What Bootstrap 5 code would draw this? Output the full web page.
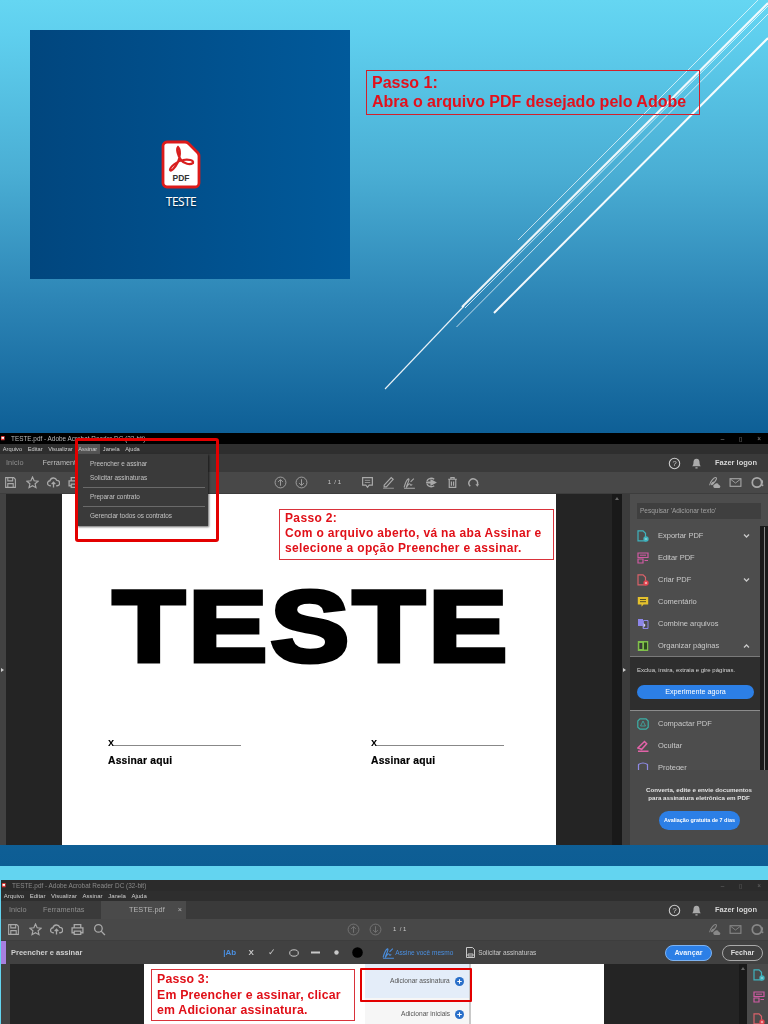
<!DOCTYPE html>
<html lang="pt">
<head>
<meta charset="utf-8">
<title>Passo a passo</title>
<link href="https://cdn.jsdelivr.net/npm/bootstrap@5.3.0/dist/css/bootstrap.min.css" rel="stylesheet">
<style>
html,body{margin:0;background:#63d4f0}
body{font-family:"Liberation Sans",Arial,sans-serif}
.deck{height:1024px;overflow:hidden}
.slide-a{height:433px;position:relative;background:linear-gradient(180deg,#65d6f2 0%,#5fcfee 8%,#4aaed4 40%,#2c84b5 70%,#0e5f96 100%);padding:30px 0 0 30px;gap:16px}
.desk{width:320px;height:249px;background:linear-gradient(90deg,#01467e,#015a9b);position:relative;flex:none}
.fileicon{position:absolute;left:131px;top:110px;width:40px;height:50px}
.filelabel{position:absolute;left:120px;width:62px;top:165px;text-align:center;color:#fff;font-size:12px;line-height:14px;font-family:"Noto Sans",sans-serif;letter-spacing:-.6px;text-shadow:0 1px 2px #001a33}
.note{border:1px solid #d3202a;color:#e3101c;font-weight:700;font-size:16px;line-height:19.5px;padding:1.500px 5px;width:334px;height:45px;margin-top:40px;position:relative;z-index:2;filter:blur(.3px)}
.rays{position:absolute;inset:0;width:768px;height:433px}
.slide-b{height:433px;background:linear-gradient(180deg,#2a7fb0,#0d5d94 100%);position:relative}
.slide-c{padding-top:14px;background:#63d4f0;position:relative}
.win{font-size:6px;color:#c8c8c8;position:relative;filter:blur(.3px)}
.win-b{height:412px;overflow:hidden}
.win-c{margin-left:1px;height:160px;overflow:hidden}
.titlebar{height:11px;background:#000;padding-left:1px;line-height:11px;color:#bbb;font-size:6.400px}
.win-c .titlebar{background:#2b2b2b;color:#8a8a8a}
.menubar{height:10px;background:#2e2e2e;line-height:10px;font-size:6px;color:#cfcfcf}
.win-b .menubar{font-size:5.700px;padding-left:0}
.menubar span{padding:0 2.800px}
.menubar .on{background:#555}
.tabbar{height:18px;background:#3a3a3a;font-size:7.300px;line-height:18px;color:#8e8e8e}
.tabbar .active-tab{background:#4a4a4a;color:#b5b5b5;width:85px;height:18px}
.toolbar{height:22px;background:#484848;color:#a9a9a9;border-bottom:1px solid #3d3d3d}
.cell{width:21.4px;flex:none;display:flex;justify-content:center;align-items:center}
.cell svg{width:13px;height:13px}
.pager{width:44px;flex:none;text-align:center;font-size:6px;color:#c8c8c8}
.logon{font-size:7.5px;font-weight:700;color:#d6d6d6;margin-left:15px;margin-right:11px}
.stage{height:351px;background:#242424}
.gutter-l{width:6px;background:#424242;position:relative}
.arrowtip{position:absolute;left:1px;top:174px;border-left:3px solid #ccc;border-top:2.5px solid transparent;border-bottom:2.5px solid transparent}
.sheet{width:494px;background:#fff;position:relative;flex:none}
.well{width:74px;flex:none;background:#242424;position:relative}
.scroll{position:absolute;right:8px;top:0;bottom:0;width:10px;background:#191919}
.scrolltip{position:absolute;left:3px;top:3px;border-bottom:3px solid #666;border-left:2.500px solid transparent;border-right:2.500px solid transparent}
.gutter-r{position:absolute;right:0;top:0;bottom:0;width:8px;background:#3c3c3c}
.gutter-r .arrowtip{left:1px}
.bigword{font-weight:700;font-size:101px;line-height:1;color:#000;-webkit-text-stroke:5px #000;transform:scaleX(1.16);transform-origin:left top;position:absolute;left:51px;top:82px;letter-spacing:3.500px;white-space:nowrap}
.signs{position:absolute;left:46px;top:243px;width:400px;gap:130px;color:#000}
.signline{width:133px}
.signx{font-weight:700;font-size:11px;line-height:10px;display:flex;align-items:flex-end}
.signx i{display:block;flex:1;border-bottom:1px solid #888;margin-bottom:1px}
.signtext{font-weight:700;font-size:10.3px;line-height:12px;margin-top:8px;letter-spacing:.2px;-webkit-text-stroke:.2px #000}
.redbox{position:absolute;border:3px solid #e30000;border-radius:3px}
.rb-menu{left:75px;top:5px;width:144px;height:104px;z-index:6}
.drop{position:absolute;left:77px;top:21px;width:131px;height:72px;background:#3a3a3a;box-shadow:1px 1px 2px #0009;font-size:6.4px;color:#c4c4c4;padding-top:3px;z-index:5}
.drop div{padding-left:13px;line-height:14px}
.drop hr{margin:2px 3px 2px 6px;border-color:#6a6a6a;opacity:1}
.callout{position:absolute;background:#fff;color:#e01018;font-weight:700;border:1px solid #d9323a;white-space:nowrap}
.cb{left:217px;top:15px;width:275px;height:51px;font-size:12px;line-height:15px;padding:1px 5px;letter-spacing:.35px}
.cc{left:7px;top:5px;width:204px;height:52px;font-size:12.300px;line-height:15.5px;padding:2px 5px;letter-spacing:.2px}
.side{width:138px;flex:none;background:#4d4d4d;position:relative;overflow:hidden;color:#c9c9c9;font-size:7.5px}
.search{margin:9px 0 6px 7px;width:124px;height:16px;background:#3f3f3f;font-size:6.5px;line-height:16px;color:#a0a0a0;padding-left:3px}
.tool{height:22px;padding-left:7px;gap:9px;width:130px;position:relative}
.tool svg{width:12px;height:12px;flex:none}
.tool .chev{position:absolute;left:113px;top:8px;width:7px;height:6px}
.tease{width:130px;height:55px;background:#2e2e2e;border-top:1px solid #7a7a7a;border-bottom:1px solid #8c8c8c;padding:9px 0 0 7px;font-size:6px;color:#d5d5d5;margin:-1px 0 2px}
.cta{width:117px;height:14px;background:#2c7fe6;border-radius:7px;color:#fff;font-size:7.2px;line-height:14px;text-align:center;margin-top:10px}
.promo{position:absolute;left:0;right:0;bottom:0;height:75px;background:#4a4a4a;text-align:center;font-size:6.2px;line-height:8px;font-weight:700;color:#e2e2e2;padding-top:16px}
.cta2{width:81px;height:19px;border-radius:10px;background:#2c7fe6;color:#fff;font-size:5.4px;line-height:19px;margin:9px 0 0 29px}
.railbar{position:absolute;right:0;top:32px;width:8px;height:244px;background:#1a1a1a}
.railbar i{display:block;margin:1px 0 0 4px;width:1px;height:100%;background:#888}
.fillbar{height:23px;background:#414141;color:#c8c8c8;font-size:7.5px}
.purple{width:5px;height:23px;background:#a67fe0;flex:none}
.fillname{font-weight:700;margin-left:5px;width:208px;color:#cfcfcf}
.pill{border-radius:9px;height:16px;line-height:14px;text-align:center;font-size:7.2px;font-weight:700;flex:none}
.pill-a{width:47px;background:#2c7fe6;border:1px solid #7db3f2;color:#eaf3ff;margin-left:auto}
.pill-b{width:41px;border:1px solid #aaa;color:#ddd;margin:0 5px 0 10px}
.stage-c{height:70px;background:#242424}
.gutter-c{width:9px;background:#424242;flex:none}
.well-l{width:134px;flex:none}
.sheet-c{width:460px;flex:none;background:#fff;position:relative}
.signpanel{position:absolute;left:221px;top:0;width:106px;height:70px;background:#f6f6f6;border-right:2px solid #c9c9c9;font-size:6.6px;color:#555}
.signrow{height:34px;background:#e4edf9;padding-left:25px;gap:5px}
.signrow.plain{background:transparent;padding-left:36px;height:32px}
.plus{width:9px;height:9px;flex:none}
.rb-sign{left:216px;top:4px;width:112px;height:34px;border-width:2.5px;border-radius:1px;z-index:4}
.well-r{flex:1;position:relative}
.rail-c{position:absolute;right:0;top:0;bottom:0;width:21px;background:#4a4a4a;padding:5px 0 0 6px}
.rail-c svg{width:12px;height:12px;display:block;margin-bottom:10px}
.scroll-c{position:absolute;right:21px;top:0;bottom:0;width:8px;background:#191919}
.scroll-c .scrolltip{left:1.500px}
</style>
</head>
<body>
<svg width="0" height="0" class="position-absolute">
<defs>
<symbol id="i-save" viewBox="0 0 12 12"><path d="M1.5 1.5h7.5l1.5 1.5v7.5h-9z M3.5 1.5v3h4.5v-3 M3.5 10.5v-3.500h5v3.500" fill="none" stroke="currentColor"/></symbol>
<symbol id="i-star" viewBox="0 0 12 12"><path d="M6 1l1.500 3.400 3.700.4-2.800 2.400.8 3.600L6 9l-3.200 1.800.8-3.600L.8 4.800l3.700-.4z" fill="none" stroke="currentColor" stroke-width="1.100"/></symbol>
<symbol id="i-cloud" viewBox="0 0 12 12"><path d="M3.500 9H3a2.300 2.300 0 0 1-.3-4.600A3.300 3.300 0 0 1 9 4a2.500 2.500 0 0 1 .3 5H8.500 M6 10.500V6 M4.300 7.500L6 5.800l1.700 1.700" fill="none" stroke="currentColor" stroke-width="1.200"/></symbol>
<symbol id="i-print" viewBox="0 0 12 12"><path d="M3 4V1.500h6V4 M3 9H1V4.500h10V9H9 M3 7.500h6v3H3z" fill="none" stroke="currentColor" stroke-width="1.200"/></symbol>
<symbol id="i-find" viewBox="0 0 12 12"><circle cx="5" cy="5" r="3.500" fill="none" stroke="currentColor" stroke-width="1.200"/><path d="M7.500 7.500l3.500 3.500" stroke="currentColor" stroke-width="1.300"/></symbol>
<symbol id="i-up" viewBox="0 0 12 12"><circle cx="6" cy="6" r="5" fill="none" stroke="currentColor" stroke-width=".8"/><path d="M6 9V3.500M3.800 5.500L6 3.300l2.200 2.200" fill="none" stroke="currentColor" stroke-width=".8"/></symbol>
<symbol id="i-down" viewBox="0 0 12 12"><circle cx="6" cy="6" r="5" fill="none" stroke="currentColor" stroke-width=".8"/><path d="M6 3v5.500M3.800 6.500L6 8.700l2.200-2.200" fill="none" stroke="currentColor" stroke-width=".8"/></symbol>
<symbol id="i-note" viewBox="0 0 12 12"><path d="M1.500 1.500h9v7h-3L6 10.500 4.500 8.500h-3z" fill="none" stroke="currentColor" stroke-width="1.100"/><path d="M3.500 4h5M3.500 6h5" stroke="currentColor" stroke-width=".7"/></symbol>
<symbol id="i-pen" viewBox="0 0 12 12"><path d="M2 8.500L8.500 1.500l1.800 1.600L4 10H2z" fill="none" stroke="currentColor" stroke-width="1.100"/><path d="M1 11.300h10" stroke="currentColor" stroke-width=".7"/></symbol>
<symbol id="i-sign" viewBox="0 0 12 12"><path d="M1 10.500C2 7 4 3 5 2.500c1.500 0-.8 4.500-2 8 2-3 3-4 3.500-3s.8 1.500 2 .3 M7 5.500L10 2.500M1 11.300h10" fill="none" stroke="currentColor" stroke-width="1"/></symbol>
<symbol id="i-share" viewBox="0 0 12 12"><path d="M8.500 3A4.500 4.500 0 0 0 1.800 4.500 M8.500 9A4.500 4.500 0 0 1 1.800 7.500" fill="none" stroke="currentColor" stroke-width="1.300"/><path d="M1 5h4V2.800L11 6 5 9.200V7H1z" fill="currentColor"/></symbol>
<symbol id="i-trash" viewBox="0 0 12 12"><path d="M2 3h8M4.500 3V1.500h3V3M3 3v7.500h6V3M5 5v4M7 5v4" fill="none" stroke="currentColor" stroke-width="1.100"/></symbol>
<symbol id="i-undo" viewBox="0 0 12 12"><path d="M3 9.500A4 4 0 1 1 9.500 8" fill="none" stroke="currentColor" stroke-width="1.300"/><path d="M7.800 7.500h3.400L9.500 10z" fill="currentColor"/></symbol>
<symbol id="i-signcloud" viewBox="0 0 12 12"><path d="M1.500 8.500C2 5 6 .5 7.500 1.500S5 7 3.800 7.800 3.500 5.500 5.500 5.500" fill="none" stroke="currentColor"/><path d="M6 11a1.700 1.700 0 0 1 .3-3.300 2 2 0 0 1 3.700.5 1.400 1.400 0 0 1 0 2.800z" fill="currentColor"/></symbol>
<symbol id="i-mail" viewBox="0 0 12 12"><rect x="1" y="2.500" width="10" height="7" fill="none" stroke="currentColor"/><path d="M1.500 3l4.500 3.500L10.500 3" fill="none" stroke="currentColor" stroke-width=".8"/></symbol>
<symbol id="i-user" viewBox="0 0 12 12"><circle cx="5.500" cy="6" r="4.300" fill="none" stroke="currentColor" stroke-width="1.600"/><circle cx="10.500" cy="8.500" r="1" fill="currentColor"/><rect x="10" y="4" width="1.100" height="3" fill="currentColor"/></symbol>
<symbol id="i-help" viewBox="0 0 12 12"><circle cx="6" cy="6" r="4.800" fill="none" stroke="currentColor"/><text x="6" y="8.500" font-size="7" text-anchor="middle" fill="currentColor" font-family="Liberation Sans">?</text></symbol>
<symbol id="i-bell" viewBox="0 0 12 12"><path d="M6 1.500c2 0 2.800 1.500 2.800 3.500 0 2 .7 3 1.200 3.500H2c.5-.5 1.200-1.500 1.200-3.500S4 1.500 6 1.500z M5 9.500h2v1H5z" fill="currentColor"/></symbol>
<symbol id="t-export" viewBox="0 0 12 12"><path d="M1 .8h5l2.500 2.500v7.500H1z" fill="none" stroke="#3fb2bd" stroke-width="1.200"/><circle cx="9" cy="9" r="2.700" fill="#3fb2bd"/><path d="M7.800 9h2.400" stroke="#fff" stroke-width=".6"/></symbol>
<symbol id="t-edit" viewBox="0 0 12 12"><path d="M1 1h10v4.500H1z M1 7h5v4H1z" fill="none" stroke="#cf5ba3" stroke-width="1.200"/><path d="M3 3.200h6M7.500 8.500H11" stroke="#cf5ba3" stroke-width="1"/></symbol>
<symbol id="t-create" viewBox="0 0 12 12"><path d="M1 .8h5l2.500 2.500v7.500H1z" fill="none" stroke="#d9626a" stroke-width="1.200"/><circle cx="9" cy="9" r="2.700" fill="#e2414c"/><path d="M7.800 9h2.400M9 7.800v2.400" stroke="#fff" stroke-width=".6"/></symbol>
<symbol id="t-comment" viewBox="0 0 12 12"><path d="M.8 1h10.400v7.500H6.500L4.500 10.800V8.500H.8z" fill="#e4c12d"/><path d="M3 3.500h6M3 5.700h6" stroke="#54502a" stroke-width="1"/></symbol>
<symbol id="t-combine" viewBox="0 0 12 12"><path d="M1 1h5v7H1z" fill="#8d86ea"/><path d="M6.500 2.500h4.500v8H6z" fill="none" stroke="#8d86ea"/><path d="M6.500 5l2 2-2 3z" fill="#d5d3ff"/></symbol>
<symbol id="t-pages" viewBox="0 0 12 12"><rect x=".8" y="1" width="10.400" height="10" fill="#7fc04a"/><rect x="2.300" y="3" width="3" height="6" fill="#3a3a3a"/><rect x="7" y="2.500" width="3" height="7" fill="#2d4a1e"/></symbol>
<symbol id="t-compress" viewBox="0 0 12 12"><path d="M3 .8h6l2.200 2.200v6.200L9 11.200H3L.8 9.200V3z" fill="none" stroke="#3cb0a7" stroke-width="1.200"/><path d="M3.500 8L6 3l2.500 5z" fill="none" stroke="#3cb0a7" stroke-width=".8"/></symbol>
<symbol id="t-redact" viewBox="0 0 12 12"><path d="M1 11.200h10.500M.8 8L7.500 1.500l2.200 2.300-5 5.500z" fill="none" stroke="#e263a8" stroke-width="1.500"/></symbol>
<symbol id="t-protect" viewBox="0 0 12 12"><path d="M1.500 12V2.500C3 1.500 4.500 1 6 1s3 .5 4.500 1.500V12" fill="none" stroke="#8f8ae6" stroke-width="1.200"/></symbol>
<symbol id="i-chev" viewBox="0 0 7 6"><path d="M1 1.500l2.500 2.500L6 1.500" fill="none" stroke="currentColor" stroke-width="1.300"/></symbol>
<symbol id="i-chevup" viewBox="0 0 7 6"><path d="M1 4.500L3.500 2 6 4.500" fill="none" stroke="currentColor" stroke-width="1.300"/></symbol>
<symbol id="i-plus" viewBox="0 0 10 10"><circle cx="5" cy="5" r="5" fill="#2a6fc9"/><path d="M5 2.500v5M2.500 5h5" stroke="#fff" stroke-width="1.200"/></symbol>
<symbol id="i-pdf" viewBox="0 0 10 10"><rect width="6" height="7" x="0" y="1" rx=".5" fill="#e03a3a"/><rect x="1" y="2.500" width="4" height="3" fill="#fff"/></symbol>
</defs>
</svg>

<div class="deck">

<section class="slide-a d-flex align-items-start">
  <svg class="rays" viewBox="0 0 768 433" aria-hidden="true">
    <g stroke="#fff" fill="none">
      <path d="M518 240L758 0" stroke-width=".9" stroke-opacity=".75"/>
      <path d="M462 307L768 3" stroke-width="2.200" stroke-opacity=".9"/>
      <path d="M465 308L768 6" stroke-width="1" stroke-opacity=".75"/>
      <path d="M456.500 327L768 14" stroke-width=".9" stroke-opacity=".8"/>
      <path d="M494 313L768 38" stroke-width="2" stroke-opacity=".95"/>
      <path d="M385 389L464 306" stroke-width="1.100" stroke-opacity=".9"/>
    </g>
  </svg>
  <div class="desk">
    <svg class="fileicon" viewBox="0 0 40 50" aria-hidden="true">
      <path d="M6 2h18c1.500 0 2.500.5 3.500 1.500l9 9c1 1 1.500 2 1.500 3.500v27a4 4 0 0 1-4 4H6a4 4 0 0 1-4-4V6a4 4 0 0 1 4-4z" fill="#fff" stroke="#dc1a1a" stroke-width="2.800"/>
      <path d="M17 7C15 9 17 16 20 20C23 24 29 25 32 23C33 20 27 19 22 20C16 21 9 27 9 30C10 32 14 28 17 22C19 17 20 10 17 7Z" fill="none" stroke="#d81e1e" stroke-width="2.200"/>
      <text x="20" y="41" text-anchor="middle" font-size="8.500" font-weight="700" fill="#333" font-family="Liberation Sans">PDF</text>
    </svg>
    <div class="filelabel">TESTE</div>
  </div>
  <div class="note">Passo 1:<br>Abra o arquivo PDF desejado pelo Adobe</div>
</section>

<section class="slide-b">
  <div class="win win-b">
    <div class="titlebar d-flex align-items-center gap-1"><svg width="6" height="7"><use href="#i-pdf"/></svg><span>TESTE.pdf - Adobe Acrobat Reader DC (32-bit)</span>
      <span class="ms-auto d-flex text-white-50" style="gap:15px;margin-right:7px"><span>–</span><span>▯</span><span>×</span></span></div>
    <div class="menubar d-flex"><span>Arquivo</span><span>Editar</span><span>Visualizar</span><span class="on">Assinar</span><span>Janela</span><span>Ajuda</span></div>
    <div class="tabbar d-flex align-items-center">
      <span class="ps-2 me-4" style="margin-left:-2px">Início</span><span style="margin-left:-5px;color:#bbb">Ferramentas</span>
      <span class="cell ms-auto" style="color:#ccc"><svg><use href="#i-help"/></svg></span><span class="cell" style="color:#aaa"><svg><use href="#i-bell"/></svg></span><span class="logon" style="margin-left:8px">Fazer logon</span>
    </div>
    <div class="toolbar d-flex align-items-center">
      <span class="cell"><svg><use href="#i-save"/></svg></span><span class="cell"><svg><use href="#i-star"/></svg></span><span class="cell"><svg><use href="#i-cloud"/></svg></span><span class="cell"><svg><use href="#i-print"/></svg></span>
      <span class="cell" style="margin-left:184px"><svg><use href="#i-up"/></svg></span><span class="cell"><svg><use href="#i-down"/></svg></span><span class="pager">1 &nbsp;/ 1</span>
      <span class="cell"><svg><use href="#i-note"/></svg></span><span class="cell"><svg><use href="#i-pen"/></svg></span><span class="cell"><svg><use href="#i-sign"/></svg></span><span class="cell"><svg><use href="#i-share"/></svg></span><span class="cell"><svg><use href="#i-trash"/></svg></span><span class="cell"><svg><use href="#i-undo"/></svg></span>
      <span class="cell ms-auto"><svg><use href="#i-signcloud"/></svg></span><span class="cell"><svg><use href="#i-mail"/></svg></span><span class="cell"><svg><use href="#i-user"/></svg></span>
    </div>
    <div class="stage d-flex">
      <div class="gutter-l"><i class="arrowtip"></i></div>
      <div style="width:56px;flex:none"></div>
      <div class="sheet">
        <div class="bigword">TESTE</div>
        <div class="signs d-flex">
          <div class="signline"><div class="signx">x<i></i></div><div class="signtext">Assinar aqui</div></div>
          <div class="signline"><div class="signx">x<i></i></div><div class="signtext">Assinar aqui</div></div>
        </div>
        <div class="callout cb">Passo 2:<br>Com o arquivo aberto, vá na aba Assinar e<br>selecione a opção Preencher e assinar.</div>
      </div>
      <div class="well"><div class="scroll"><i class="scrolltip"></i></div><div class="gutter-r"><i class="arrowtip"></i></div></div>
      <div class="side">
        <div class="search">Pesquisar 'Adicionar texto'</div>
        <div class="tool d-flex align-items-center"><svg><use href="#t-export"/></svg>Exportar PDF<svg class="chev"><use href="#i-chev"/></svg></div>
        <div class="tool d-flex align-items-center"><svg><use href="#t-edit"/></svg>Editar PDF</div>
        <div class="tool d-flex align-items-center"><svg><use href="#t-create"/></svg>Criar PDF<svg class="chev"><use href="#i-chev"/></svg></div>
        <div class="tool d-flex align-items-center"><svg><use href="#t-comment"/></svg>Comentário</div>
        <div class="tool d-flex align-items-center"><svg><use href="#t-combine"/></svg>Combine arquivos</div>
        <div class="tool d-flex align-items-center"><svg><use href="#t-pages"/></svg>Organizar páginas<svg class="chev"><use href="#i-chevup"/></svg></div>
        <div class="tease">Exclua, insira, extraia e gire páginas.<div class="cta">Experimente agora</div></div>
        <div class="tool d-flex align-items-center"><svg><use href="#t-compress"/></svg>Compactar PDF</div>
        <div class="tool d-flex align-items-center"><svg><use href="#t-redact"/></svg>Ocultar</div>
        <div class="tool d-flex align-items-center"><svg><use href="#t-protect"/></svg>Proteger</div>
        <div class="railbar"><i></i></div>
        <div class="promo"><div>Converta, edite e envie documentos<br>para assinatura eletrônica em PDF</div><div class="cta2">Avaliação gratuita de 7 dias</div></div>
      </div>
    </div>
    <div class="drop"><div>Preencher e assinar</div><div>Solicitar assinaturas</div><hr><div>Preparar contrato</div><hr><div>Gerenciar todos os contratos</div></div>
    <div class="redbox rb-menu"></div>
  </div>
</section>

<section class="slide-c">
  <div class="win win-c">
    <div class="titlebar d-flex align-items-center gap-1"><svg width="6" height="7"><use href="#i-pdf"/></svg><span>TESTE.pdf - Adobe Acrobat Reader DC (32-bit)</span>
      <span class="ms-auto d-flex" style="gap:15px;margin-right:7px;color:#666"><span>–</span><span>▯</span><span>×</span></span></div>
    <div class="menubar d-flex"><span>Arquivo</span><span>Editar</span><span>Visualizar</span><span>Assinar</span><span>Janela</span><span>Ajuda</span></div>
    <div class="tabbar d-flex align-items-center">
      <span style="margin-left:8px;width:34px">Início</span><span style="width:58px">Ferramentas</span>
      <span class="active-tab d-flex justify-content-between"><span style="margin-left:28px">TESTE.pdf</span><span class="me-1">×</span></span>
      <span class="cell ms-auto" style="color:#ccc"><svg><use href="#i-help"/></svg></span><span class="cell" style="color:#aaa"><svg><use href="#i-bell"/></svg></span><span class="logon" style="margin-left:8px">Fazer logon</span>
    </div>
    <div class="toolbar d-flex align-items-center">
      <span class="cell" style="margin-left:2px"><svg><use href="#i-save"/></svg></span><span class="cell"><svg><use href="#i-star"/></svg></span><span class="cell"><svg><use href="#i-cloud"/></svg></span><span class="cell"><svg><use href="#i-print"/></svg></span><span class="cell"><svg><use href="#i-find"/></svg></span>
      <span class="cell" style="margin-left:233px;color:#777"><svg><use href="#i-up"/></svg></span><span class="cell" style="color:#777"><svg><use href="#i-down"/></svg></span><span class="pager" style="margin-left:-8px">1 &nbsp;/ 1</span>
      <span class="cell ms-auto" style="color:#888"><svg><use href="#i-signcloud"/></svg></span><span class="cell" style="color:#888"><svg><use href="#i-mail"/></svg></span><span class="cell" style="color:#888"><svg><use href="#i-user"/></svg></span>
    </div>
    <div class="fillbar d-flex align-items-center">
      <span class="purple"></span><span class="fillname">Preencher e assinar</span>
      <span class="cell" style="color:#4a8fe0;font-size:8px;font-weight:700">|Ab</span><span class="cell" style="font-size:8px;font-weight:700">X</span><span class="cell" style="font-size:9px">✓</span><span class="cell"><svg style="width:10px;height:8px" viewBox="0 0 10 8"><ellipse cx="5" cy="4" rx="4.300" ry="3.200" fill="none" stroke="currentColor"/></svg></span><span class="cell"><svg style="width:9px;height:3px" viewBox="0 0 9 3"><rect y=".5" width="9" height="2" fill="currentColor"/></svg></span><span class="cell"><svg style="width:5px;height:5px" viewBox="0 0 5 5"><circle cx="2.500" cy="2.500" r="2.200" fill="currentColor"/></svg></span><span class="cell" style="margin-left:-1px"><svg style="width:11px;height:11px" viewBox="0 0 11 11"><circle cx="5.500" cy="5.500" r="5.300" fill="#000"/></svg></span>
      <span class="cell" style="color:#4a8fe0;margin-left:10px"><svg><use href="#i-sign"/></svg></span><span style="color:#4a8fe0;font-size:6.500px;margin-left:-4px;width:71px">Assine você mesmo</span>
      <svg width="9" height="11" viewBox="0 0 9 11" class="flex-none"><path d="M.5.500h6L8.500 2.500v8h-8z M2 7h5v2H2z" fill="none" stroke="currentColor"/></svg><span style="font-size:6.500px;margin-left:3px">Solicitar assinaturas</span>
      <span class="pill pill-a">Avançar</span><span class="pill pill-b">Fechar</span>
    </div>
    <div class="stage-c d-flex">
      <div class="gutter-c"></div>
      <div class="well-l"></div>
      <div class="sheet-c">
        <div class="callout cc">Passo 3:<br>Em Preencher e assinar, clicar<br>em Adicionar assinatura.</div>
        <div class="signpanel">
          <div class="signrow d-flex align-items-center">Adicionar assinatura<svg class="plus"><use href="#i-plus"/></svg></div>
          <div class="signrow plain d-flex align-items-center">Adicionar iniciais<svg class="plus"><use href="#i-plus"/></svg></div>
        </div>
        <div class="redbox rb-sign"></div>
      </div>
      <div class="well-r">
        <div class="scroll-c"><i class="scrolltip"></i></div>
        <div class="rail-c"><svg><use href="#t-export"/></svg><svg><use href="#t-edit"/></svg><svg><use href="#t-create"/></svg></div>
      </div>
    </div>
  </div>
</section>

</div>
<script src="https://cdn.jsdelivr.net/npm/bootstrap@5.3.0/dist/js/bootstrap.bundle.min.js"></script>
</body>
</html>
